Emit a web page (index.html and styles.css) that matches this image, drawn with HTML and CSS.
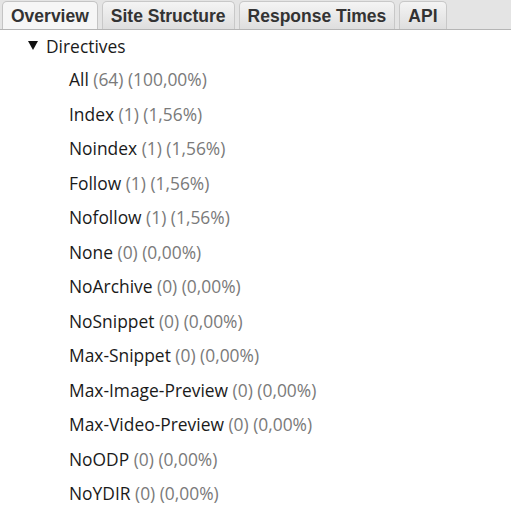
FILE: index.html
```html
<!DOCTYPE html>
<html>
<head>
<meta charset="utf-8">
<link rel="stylesheet" href="styles.css">
</head>
<body>
<div class="tabs">
  <div class="tab active">Overview</div>
  <div class="tab">Site Structure</div>
  <div class="tab">Response Times</div>
  <div class="tab">API</div>
</div>
<div class="tree">
  <div class="group"><span class="arrow"></span>Directives</div>
  <ul class="items">
    <li>All <span class="n">(64) (100,00%)</span></li>
    <li>Index <span class="n">(1) (1,56%)</span></li>
    <li>Noindex <span class="n">(1) (1,56%)</span></li>
    <li>Follow <span class="n">(1) (1,56%)</span></li>
    <li>Nofollow <span class="n">(1) (1,56%)</span></li>
    <li>None <span class="n">(0) (0,00%)</span></li>
    <li>NoArchive <span class="n">(0) (0,00%)</span></li>
    <li>NoSnippet <span class="n">(0) (0,00%)</span></li>
    <li>Max-Snippet <span class="n">(0) (0,00%)</span></li>
    <li>Max-Image-Preview <span class="n">(0) (0,00%)</span></li>
    <li>Max-Video-Preview <span class="n">(0) (0,00%)</span></li>
    <li>NoODP <span class="n">(0) (0,00%)</span></li>
    <li>NoYDIR <span class="n">(0) (0,00%)</span></li>
  </ul>
</div>
</body>
</html>
```
FILE: styles.css
```css
html, body { margin: 0; padding: 0; background: #fff; }
body { font-family: "Open Sans", "Noto Sans", sans-serif; color: #1a1a1a; }
.tabs {
  display: flex;
  gap: 4px;
  padding: 1px 2px 0;
  height: 28px;
  background: #e4e4e4;
  border-bottom: 1px solid #b5b5b5;
  align-items: flex-end;
}
.tab {
  font-family: "Liberation Sans", Arial, sans-serif;
  font-weight: bold;
  font-size: 17.5px;
  color: #333;
  height: 27px;
  line-height: 29px;
  padding: 0 8px;
  border: 1px solid #c8c8c8;
  border-bottom: none;
  border-radius: 5px 5px 0 0;
  background: linear-gradient(#f4f4f4, #dedede);
}
.tab.active { background: #f6f6f6; border-color: #c4c4c4; }
.tree { padding: 0 0 0 28px; }
.group { font-size: 17.4px; height: 31px; line-height: 30px; display: flex; align-items: center; }
.arrow {
  display: inline-block;
  width: 0; height: 0;
  border-left: 5px solid transparent;
  border-right: 5px solid transparent;
  border-top: 9px solid #111;
  margin-right: 8px;
}
.items { list-style: none; margin: 0; padding: 0 0 0 41px; }
.items li { font-size: 17.4px; height: 34.5px; line-height: 36px; }
.n { color: #7a7a7a; }
```
